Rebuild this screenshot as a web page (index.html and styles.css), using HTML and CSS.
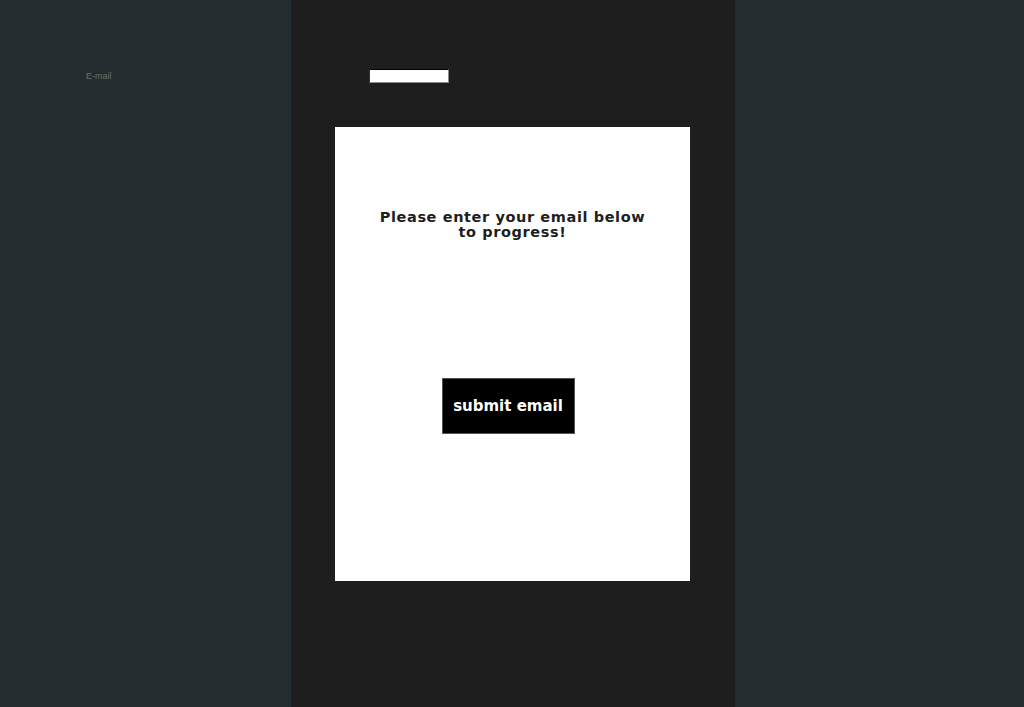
FILE: index.html
```html
<!DOCTYPE html>
<html>
<head>
<meta charset="utf-8">
<link rel="stylesheet" href="styles.css">
</head>
<body>
<div class="page">
  <aside class="side side-left">
    <label class="label" for="email">E-mail</label>
  </aside>
  <main class="center">
    <input class="email-input" id="email" type="text">
    <section class="card">
      <h1 class="heading">Please enter your email below<br>to progress!</h1>
      <button class="submit" type="button">submit email</button>
    </section>
  </main>
  <aside class="side side-right"></aside>
</div>
</body>
</html>
```
FILE: styles.css
```css
html, body {
  margin: 0;
  padding: 0;
  height: 100%;
}
body {
  background: #232d30;
  font-family: "DejaVu Sans", sans-serif;
}
.page {
  display: flex;
  height: 707px;
}
.side {
  background: #232d30;
}
.side-left {
  width: 291px;
  padding: 71px 0 0 86px;
  box-sizing: border-box;
}
.side-right {
  flex: 1;
}
.label {
  font-family: "Liberation Sans", Arial, sans-serif;
  font-size: 9px;
  color: #6b6f70;
  display: block;
}
.center {
  width: 444px;
  background: #1e1e1e;
  display: flex;
  flex-direction: column;
}
.email-input {
  margin: 69px 0 0 78px;
  width: 80px;
  height: 14px;
  box-sizing: border-box;
  border: 1px solid #8a8a8a;
  border-top-color: #000;
  border-left-color: #333;
  background: #fff;
  padding: 0;
}
.card {
  margin: 44px 0 0 44px;
  width: 355px;
  height: 454px;
  background: #fff;
  display: flex;
  flex-direction: column;
  align-items: center;
}
.heading {
  margin: 83px 0 0 0;
  font-size: 14.5px;
  line-height: 15px;
  font-weight: bold;
  color: #1e1e1e;
  text-align: center;
  letter-spacing: 0.6px;
}
.submit {
  margin: 138px 9px 0 0;
  width: 133px;
  height: 56px;
  background: #000;
  color: #fff;
  border: 1px solid #555;
  font-family: "DejaVu Sans", sans-serif;
  font-weight: bold;
  font-size: 15px;
  padding: 0;
}
```
